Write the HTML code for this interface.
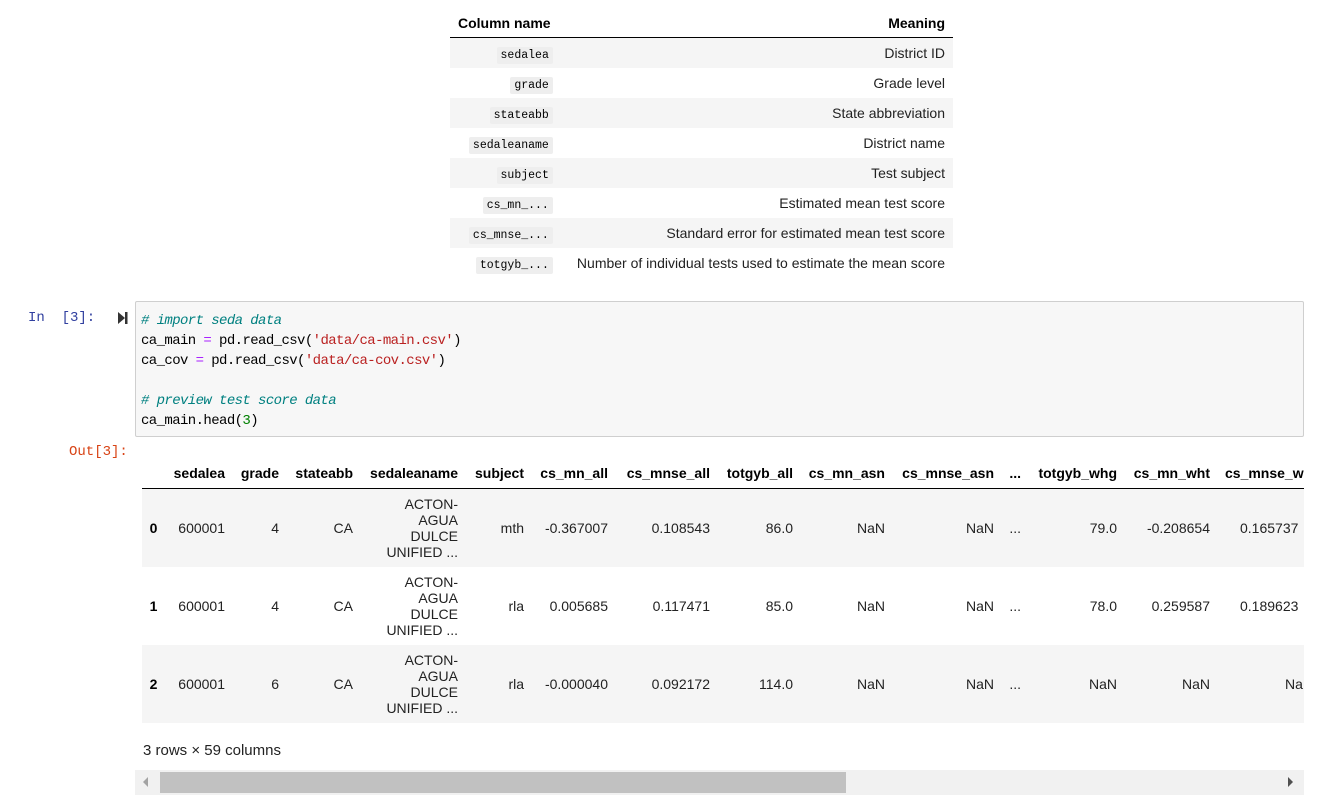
<!DOCTYPE html>
<html><head><meta charset="utf-8"><style>
body{margin:0;width:1325px;height:806px;background:#fff;font-family:"Liberation Sans",Arial,sans-serif;color:#000;position:relative;overflow:hidden}
.a{position:absolute}
table{border-collapse:collapse}
#t1{left:450px;top:8px;width:503px;font-size:14px}
#t1 th{font-weight:bold;height:29px;padding:0 8px;border-bottom:1px solid #000;text-align:left}
#t1 th.r{text-align:right}
#t1 td{height:30px;padding:0 8px;text-align:right;color:#222}
#t1 tr.g td{background:#f5f5f5}
code{font-family:"Liberation Mono",monospace;font-size:11.5px;background:#eee;padding:2px 4px;border-radius:2px;color:#000}
.code{left:135px;top:301px;width:1167px;height:134px;background:#f7f7f7;border:1px solid #cfcfcf;border-radius:2px;font-family:"Liberation Mono",monospace;font-size:14px;line-height:20px}
.code pre{margin:0;padding:9px 5px;font-family:inherit;letter-spacing:-0.6px}
.cm{color:#008080;font-style:italic}.s{color:#ba2121}.o{color:#aa22ff}.n{color:#008000}
.pr{font-family:"Liberation Mono",monospace;font-size:14px}
#df{position:absolute;left:142px;top:458px;font-size:14px;table-layout:fixed;width:1240px}
#dfw{position:absolute;left:142px;top:458px;width:1162px;height:266px;overflow:hidden}
#df th{height:30px;font-weight:bold;text-align:right;padding:0 7px 0 0;border-bottom:1px solid #000;white-space:nowrap}
#df td{height:78px;text-align:right;padding:0 7px 0 0;line-height:16px;white-space:nowrap;color:#222}
#df tr.g td,#df tr.g th{background:#f5f5f5}
#df tbody th{border:none;height:78px;text-align:center;padding:0}
</style></head><body>
<table id="t1" class="a"><tr><th>Column name</th><th class="r">Meaning</th></tr>
<tr class="g"><td><code>sedalea</code></td><td>District ID</td></tr>
<tr><td><code>grade</code></td><td>Grade level</td></tr>
<tr class="g"><td><code>stateabb</code></td><td>State abbreviation</td></tr>
<tr><td><code>sedaleaname</code></td><td>District name</td></tr>
<tr class="g"><td><code>subject</code></td><td>Test subject</td></tr>
<tr><td><code>cs_mn_...</code></td><td>Estimated mean test score</td></tr>
<tr class="g"><td><code>cs_mnse_...</code></td><td>Standard error for estimated mean test score</td></tr>
<tr><td><code>totgyb_...</code></td><td>Number of individual tests used to estimate the mean score</td></tr>
</table>
<div class="a pr" style="left:28px;top:310px;color:#303f9f">In&nbsp;&nbsp;[3]:</div>
<svg class="a" style="left:117px;top:311px" width="12" height="14"><path d="M1 1 L8 7 L1 13Z" fill="#333"/><rect x="8" y="1" width="2.5" height="12" fill="#333"/></svg>
<div class="a code"><pre><span class="cm"># import seda data</span>
ca_main <span class="o">=</span> pd.read_csv(<span class="s">'data/ca-main.csv'</span>)
ca_cov <span class="o">=</span> pd.read_csv(<span class="s">'data/ca-cov.csv'</span>)

<span class="cm"># preview test score data</span>
ca_main.head(<span class="n">3</span>)</pre></div>
<div class="a pr" style="left:69px;top:444px;color:#d84315">Out[3]:</div>
<div id="dfw"><table id="df" style="left:0;top:0">
<colgroup><col style="width:23px"><col style="width:67px"><col style="width:54px"><col style="width:74px"><col style="width:105px"><col style="width:66px"><col style="width:84px"><col style="width:102px"><col style="width:83px"><col style="width:92px"><col style="width:109px"><col style="width:27px"><col style="width:96px"><col style="width:93px"><col style="width:165px"></colgroup>
<thead><tr><th></th><th>sedalea</th><th>grade</th><th>stateabb</th><th>sedaleaname</th><th>subject</th><th>cs_mn_all</th><th>cs_mnse_all</th><th>totgyb_all</th><th>cs_mn_asn</th><th>cs_mnse_asn</th><th>...</th><th>totgyb_whg</th><th>cs_mn_wht</th><th style="text-align:left;padding-left:8px">cs_mnse_wht</th></tr></thead>
<tbody>
<tr class="g"><th>0</th><td>600001</td><td>4</td><td>CA</td><td>ACTON-<br>AGUA<br>DULCE<br>UNIFIED ...</td><td>mth</td><td>-0.367007</td><td>0.108543</td><td>86.0</td><td>NaN</td><td>NaN</td><td>...</td><td>79.0</td><td>-0.208654</td><td style="text-align:left;padding-left:23px">0.165737</td></tr>
<tr><th>1</th><td>600001</td><td>4</td><td>CA</td><td>ACTON-<br>AGUA<br>DULCE<br>UNIFIED ...</td><td>rla</td><td>0.005685</td><td>0.117471</td><td>85.0</td><td>NaN</td><td>NaN</td><td>...</td><td>78.0</td><td>0.259587</td><td style="text-align:left;padding-left:23px">0.189623</td></tr>
<tr class="g"><th>2</th><td>600001</td><td>6</td><td>CA</td><td>ACTON-<br>AGUA<br>DULCE<br>UNIFIED ...</td><td>rla</td><td>-0.000040</td><td>0.092172</td><td>114.0</td><td>NaN</td><td>NaN</td><td>...</td><td>NaN</td><td>NaN</td><td style="text-align:left;padding-left:68px">NaN</td></tr>
</tbody></table></div>
<div class="a" style="left:143px;top:742px;font-size:15px;color:#222">3 rows × 59 columns</div>
<div class="a" style="left:135px;top:770px;width:1169px;height:25px;background:#f1f1f1"></div>
<div class="a" style="left:160px;top:772px;width:686px;height:21px;background:#c1c1c1"></div>
<svg class="a" style="left:143px;top:777px" width="6" height="10"><path d="M5 0 L0 5 L5 10Z" fill="#a3a3a3"/></svg>
<svg class="a" style="left:1288px;top:777px" width="6" height="10"><path d="M0 0 L5 5 L0 10Z" fill="#505050"/></svg>
</body></html>
